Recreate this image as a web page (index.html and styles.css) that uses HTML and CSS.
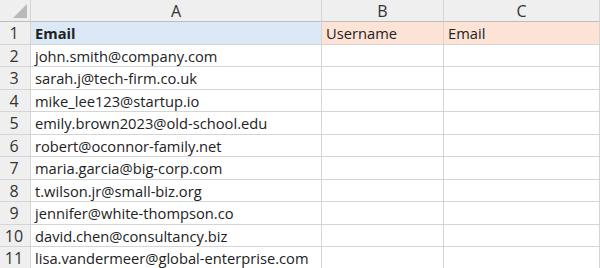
FILE: index.html
```html
<!DOCTYPE html>
<html>
<head>
<meta charset="utf-8">
<link rel="stylesheet" href="styles.css">
</head>
<body>
<div class="sheet">
  <div class="corner"><span class="tri"></span></div>
  <div class="colhead">A</div>
  <div class="colhead">B</div>
  <div class="colhead">C</div>

  <div class="rowhead">1</div>
  <div class="cell hdr-a"><b>Email</b></div>
  <div class="cell hdr-b">Username</div>
  <div class="cell hdr-b">Email</div>

  <div class="rowhead">2</div><div class="cell">john.smith@company.com</div><div class="cell"></div><div class="cell"></div>
  <div class="rowhead">3</div><div class="cell">sarah.j@tech-firm.co.uk</div><div class="cell"></div><div class="cell"></div>
  <div class="rowhead">4</div><div class="cell">mike_lee123@startup.io</div><div class="cell"></div><div class="cell"></div>
  <div class="rowhead">5</div><div class="cell">emily.brown2023@old-school.edu</div><div class="cell"></div><div class="cell"></div>
  <div class="rowhead">6</div><div class="cell">robert@oconnor-family.net</div><div class="cell"></div><div class="cell"></div>
  <div class="rowhead">7</div><div class="cell">maria.garcia@big-corp.com</div><div class="cell"></div><div class="cell"></div>
  <div class="rowhead">8</div><div class="cell">t.wilson.jr@small-biz.org</div><div class="cell"></div><div class="cell"></div>
  <div class="rowhead">9</div><div class="cell">jennifer@white-thompson.co</div><div class="cell"></div><div class="cell"></div>
  <div class="rowhead">10</div><div class="cell">david.chen@consultancy.biz</div><div class="cell"></div><div class="cell"></div>
  <div class="rowhead last">11</div><div class="cell last">lisa.vandermeer@global-enterprise.com</div><div class="cell last"></div><div class="cell last"></div>
</div>
</body>
</html>
```
FILE: styles.css
```css
html, body {
  margin: 0;
  padding: 0;
  background: #ffffff;
  overflow: hidden;
}
.sheet {
  display: grid;
  grid-template-columns: 31px 291px 122px 156px;
  grid-template-rows: 22px;
  grid-auto-rows: 22.5px;
  width: 600px;
  font-family: "Open Sans", "Noto Sans", sans-serif;
  font-size: 14.7px;
  color: #222222;
}
.sheet > div {
  box-sizing: border-box;
  border-right: 1px solid #d5d5d5;
  border-bottom: 1px solid #d5d5d5;
  white-space: nowrap;
  overflow: visible;
}
.sheet > .last {
  border-bottom: none;
}
.corner {
  background: #efefef;
  position: relative;
  border-bottom: 1px solid #bdbdbd !important;
}
.tri {
  position: absolute;
  right: 3px;
  bottom: 3px;
  width: 0;
  height: 0;
  border-left: 14px solid transparent;
  border-bottom: 14px solid #b9b9b9;
}
.colhead {
  background: #efefef;
  text-align: center;
  line-height: 22px;
  font-size: 16px;
  color: #333333;
  border-bottom: 1px solid #bdbdbd !important;
}
.rowhead {
  background: #efefef;
  text-align: center;
  line-height: 22px;
  font-size: 16px;
  color: #333333;
  padding-right: 2px;
}
.cell {
  line-height: 22px;
  padding-left: 4px;
}
.hdr-a {
  background: #dbe8f6;
}
.hdr-b {
  background: #fce3d6;
}
```
